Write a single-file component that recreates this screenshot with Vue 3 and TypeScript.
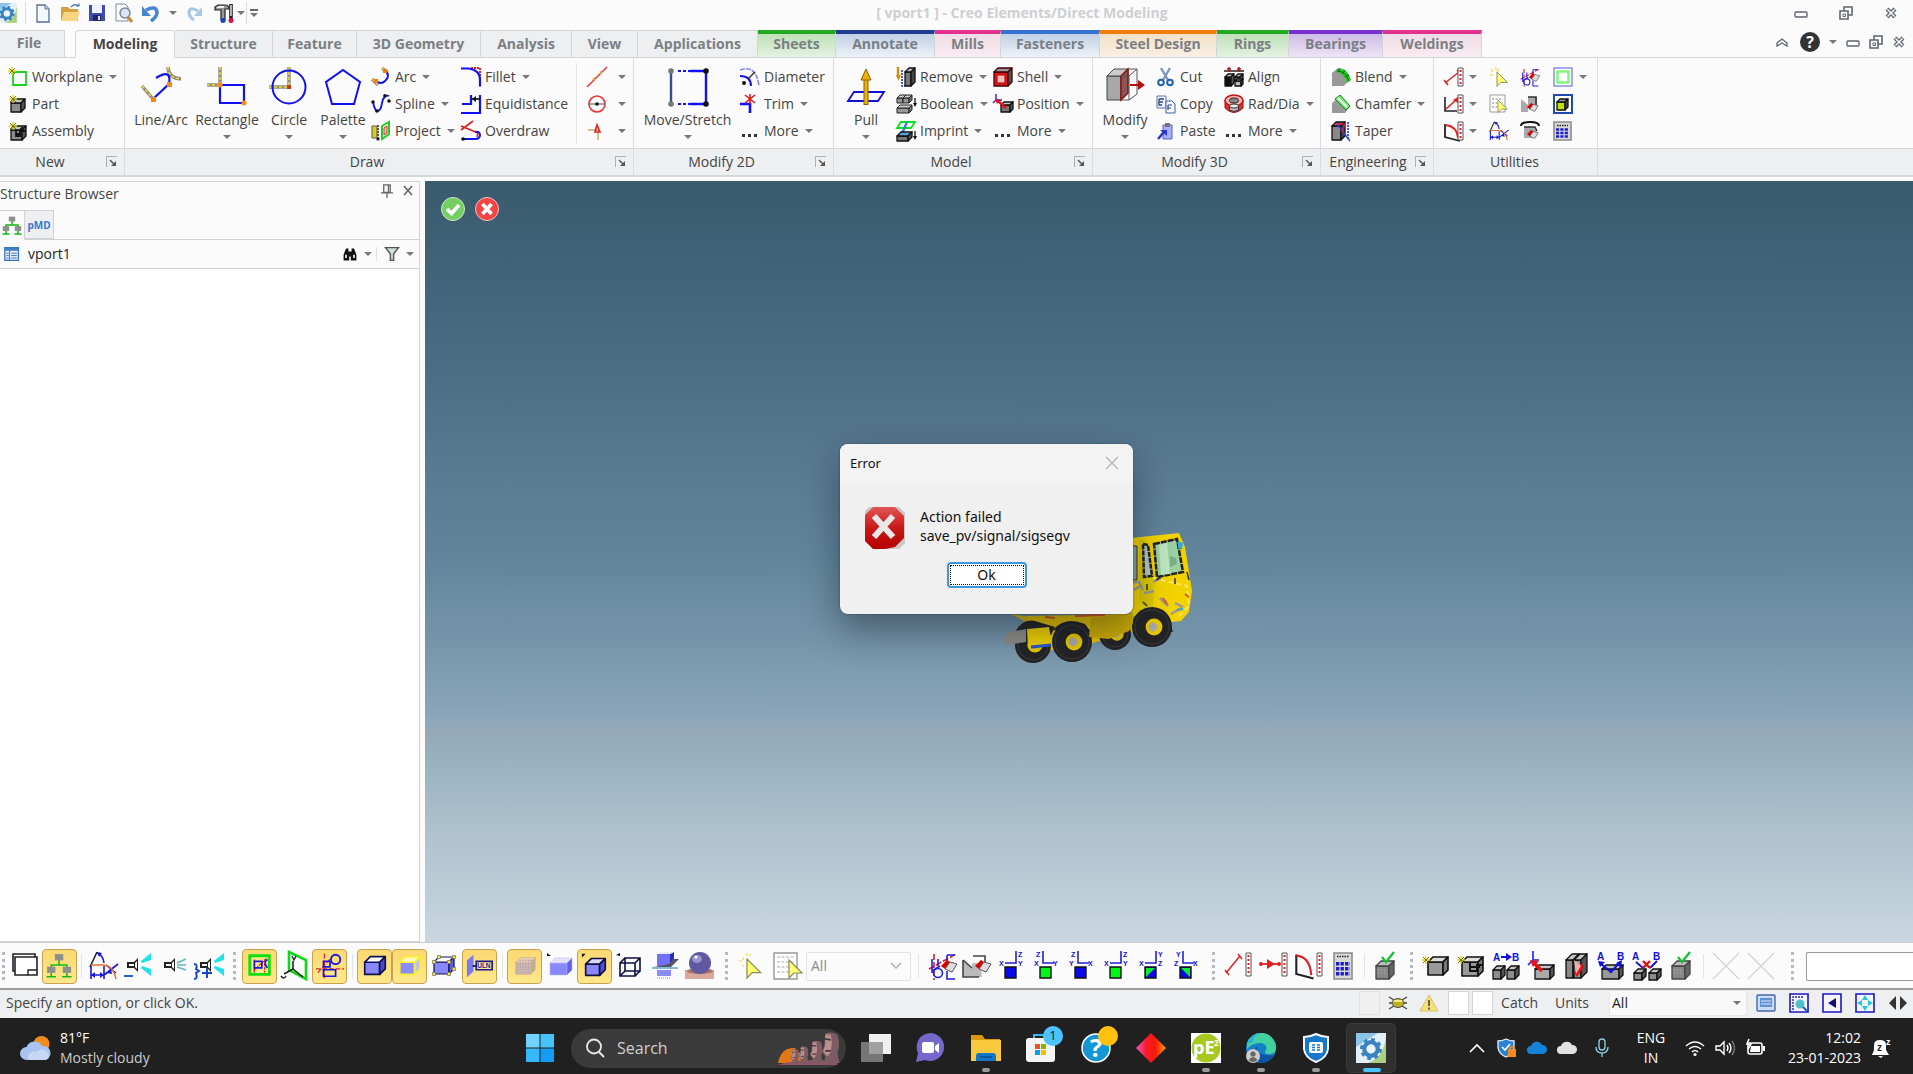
<script setup lang="ts">
interface Tab { label: string; w: number; tint?: string }
interface Item { icon: string; label?: string; name?: string; caret?: boolean }
interface Col { w: number; big?: Item; items?: Item[]; sep?: boolean }
interface Group { title: string; w: number; pad: number; launcher?: boolean; cols: Col[] }
interface Tool { kind?: 'sep' | 'grip' | 'select'; w?: number; icon?: string; name?: string; on?: boolean }

const box = (x: number, y: number, w: number, h: number, d: number, f = '#8c8c8c', t = '#c4c4c4', s = '#555', k = '#111', sw = 1.3) =>
  `<g stroke="${k}" stroke-width="${sw}" stroke-linejoin="round"><path d="M${x} ${y + d}h${w}v${h}h${-w}z" fill="${f}"/><path d="M${x} ${y + d}l${d} ${-d}h${w}l${-d} ${d}z" fill="${t}"/><path d="M${x + w} ${y + d}l${d} ${-d}v${h}l${-d} ${d}z" fill="${s}"/></g>`
const ln = (d: string, c: string, w = 1.5, extra = '') => `<path d="${d}" fill="none" stroke="${c}" stroke-width="${w}" ${extra}/>`
const fl = (d: string, c: string) => `<path d="${d}" fill="${c}"/>`
const spark = (x: number, y: number) => `<g transform="translate(${x} ${y})">${ln('M4 0v8M0 4h8', '#e6dc00', 1.4)}${ln('M1 1l6 6M7 1l-6 6', '#6d6a3c', 1)}</g>`
const tan = (d: string) => ln(d, '#908c80', 3.4) + ln(d, '#f0e030', 1.4, 'stroke-dasharray="3 2"')
const dot = (x: number, y: number, r: number, c: string) => `<circle cx="${x}" cy="${y}" r="${r}" fill="${c}"/>`
const ruler = (x: number, y: number, h: number) => `<path d="M${x} ${y}h5v${h}h-5z" fill="#fff" stroke="#555"/>` + ln(`M${x + 2.5} ${y + 2}v${h - 3}`, '#d22', 2, 'stroke-dasharray="2 2"')
const txt = (x: number, y: number, s: string, size: number, c: string) => `<text x="${x}" y="${y}" font-size="${size}" font-weight="700" fill="${c}" font-family="Liberation Sans, sans-serif">${s}</text>`
const cursor = (x: number, y: number, k = 1) => `<path transform="translate(${x} ${y}) scale(${k})" d="M0 0v18l5-5 8 0z" fill="#ffff70" stroke="#8a8a60" stroke-width="1.2"/>`
const eraser = (x: number, y: number) => `<g transform="translate(${x} ${y})"><path d="M0 6l6-6 3 2-5 7z" fill="#d00"/><path d="M4 9l5-7 7 2-5 8z" fill="#ddd" stroke="#555"/></g>`
const calc = (w: number, h: number) => `<path d="M1 1h${w - 2}v${h - 2}H1z" fill="#d8d8d8" stroke="#8c8c8c" stroke-width="1.6"/>` + ln(`M4 4.500h${w - 8}`, '#222', 1.6, 'stroke-dasharray="1.500 1"') + ln(`M3 ${h * 0.42}h${w - 6}M3 ${h * 0.6}h${w - 6}M3 ${h * 0.78}h${w - 6}`, '#1c1cc8', h / 8, `stroke-dasharray="${w / 6} 1.2"`)
const axes = (flip: boolean, a: string, b: string, c: string, f: string, tri = '') =>
  ln(flip ? 'M10 0v12h11' : 'M18 0v12H7', '#2020d8', 1.6) + txt(flip ? 3 : 20, 6, a, 7, '#1010e0') + txt(1, 15, b, 7, '#1010e0') + txt(20, 15, c, 7, '#1010e0') +
  `<path d="M7 16h11v11H7z" fill="${f}" stroke="#111" stroke-width="1.4"/>` + tri
const gear = (s: number) => `<rect width="30" height="30" fill="#e4f0f8"/><path d="M12 30Q28 24 30 4v26z" fill="#a8d080"/><path d="M0 0h22L0 14z" fill="#8cc4ea"/><g transform="translate(15 16) scale(${s})"><circle r="8" fill="none" stroke="#3b82c0" stroke-width="5"/><circle r="11" fill="none" stroke="#3b82c0" stroke-width="4" stroke-dasharray="4.300 4.300"/><circle r="3.500" fill="#eef6fc"/></g>`
const nodes = (g: string, w: number, h: number) =>
  ln(`M${w / 2} ${h * 0.3}v${h * 0.2}M${w * 0.2} ${h * 0.66}v${-h * 0.16}h${w * 0.6}v${h * 0.16}`, g, 1.6) +
  [[0.5, 0.08], [0.2, 0.56], [0.8, 0.56]].map(([x, y]) => `<rect x="${w * x - w * 0.16}" y="${h * y}" width="${w * 0.32}" height="${h * 0.24}" fill="#8f8f8f"/>`).join('') +
  ln(`M${w * 0.02} ${h * 0.95}h${w * 0.36}M${w * 0.62} ${h * 0.95}h${w * 0.36}M${w * 0.2} ${h * 0.8}v${h * 0.15}M${w * 0.8} ${h * 0.8}v${h * 0.15}`, g, 1.6)
const check = (x: number, y: number) => ln(`M${x} ${y}l4 5 8-10`, '#10c030', 2.2)
const dimArc = ln('M1 16L8 1', '#222', 1.6) + ln('M8 2q6 2 7 10M2 15v13M15 15v13M2 24h13M15 24L29 13M17 14l10 8', '#1818e0', 1.6) + ln('M2 14h12q10 0 13 14', '#e07030', 1.6) + fl('M8 1l5 1-3 4zM2 24l4-3v6zM15 24l-4-3v6zM18 22l5 1-1-5z', '#1818e0')
const lamp = (beam: number) => fl('M3 11h7l4-4v14l-4-4H3z', '#222') + fl('M5 13h5v2H5zM11 12l2-2v8l-2-2z', '#fff') + (beam === 2 ? fl('M17 10L27 2v7l-9 3zM17 17l10 8v-7l-9-3z', '#20e0e8') : ln('M16 12l9-4M16 14h9M16 16l9 3', '#60b8c0', 1.6))
const sketch = ln('M1 18L28 3M6 3v26', '#e01010', 1.5, 'stroke-dasharray="6 2"') + ln('M4 8v14M10 8v7M4 20l8-5M19 4h8M19 4v8M19 20v8h8', '#2020e0', 1.6) + '<circle cx="10" cy="22" r="4.500" fill="none" stroke="#2020e0" stroke-width="1.600"/>'
const measure = (n: number, h: number) => n === 0 ? ln(`M2 ${h - 4}L16 5M1 ${h - 7}l4 5M14 3l4 5`, '#e02020', 1.5) : n === 1 ? ln(`M2 3v${h - 6}h12`, '#222', 1.6) + ln(`M3 ${h - 5}L14 5`, '#e02020', 1.6) + fl('M15 3v6l-5-3z', '#e02020') : ln(`M2 3v${h - 7}l15 4`, '#222', 1.8) + ln(`M2 4q12 1 13 ${h - 7}`, '#e02020', 1.8)
const winX = ln('M2 2l8 8M10 2l-8 8', '#5f6670', 4) + ln('M2.500 2.500l7 7M9.500 2.500l-7 7', '#fff', 1.5)
const folder = fl('M1 4h7l2 2h8v12H1z', '#d9a13b') + fl('M4 9h16l-3 9H1z', '#f6d583') + ln('M11 4q3-4 7-1', '#557aa8', 1.4) + fl('M16 4l4-1-1-3z', '#557aa8')

const I: Record<string, string> = {
  app: `<g transform="scale(.66)">${gear(0.9)}</g>`,
  doc: '<path d="M4 2h8l4 4v13H4z" fill="#f4f8ff" stroke="#5a6f96" stroke-width="1.300"/><path d="M12 2v4h4" fill="#cbd8ee" stroke="#5a6f96"/>',
  open: folder,
  save: fl('M2 2h16v16H2z', '#3f4bb0') + fl('M5 2h10v8H5z', '#eef2ff') + fl('M6 12h8v6H6z', '#20285e') + fl('M11 13h2v4h-2z', '#dde'),
  preview: '<path d="M2 1h9l3 3v14H2z" fill="#fafcff" stroke="#7d8ba3"/><circle cx="11" cy="10" r="5" fill="#d7e6f2" stroke="#7b8794" stroke-width="1.500"/>' + ln('M14 14l4 5', '#c58a3a', 3),
  undo: ln('M5 7q10-5 11 2 0 5-6 9', '#4a86cf', 3.5) + fl('M1 3v10h9z', '#4a86cf'),
  redo: ln('M14 8Q6 3 5 9q0 5 5 8', '#a9c8e6', 3.2) + fl('M18 4v9h-8z', '#a9c8e6'),
  tools: '<path d="M1 7V4l3-2h7q4 0 4 4h-4v11H7V7H5z" fill="#999" stroke="#222" stroke-width="1.200"/><path d="M2 5l3-2h5v2z" fill="#eee"/>' + ln('M17 1v15', '#222', 3.6) + ln('M17 2v11', '#eee', 1.4) + dot(9, 17.5, 2.5, '#1048c8') + dot(17, 17.5, 2.5, '#e01050'),
  workplane: '<path d="M5 5h13v13H5z" fill="none" stroke="#1fd01f" stroke-width="1.800"/>' + spark(0, 0),
  part: box(3, 5, 10, 9, 4) + spark(1, 1),
  assembly: box(3, 5, 11, 10, 4) + ln('M8 9v6h4v-5h6M12 9l3-3M8 13h5', '#111', 1.8) + spark(1, 1),
  lineArc: tan('M1 20l11 13M27 1q0 11 13 12') + ln('M12 33L28 18Q31 2 15 12', '#1010f0', 2.2) + fl('M10 31h5v5h-5zM26 16h5v5h-5z', '#f08a10'),
  rectangle: tan('M13 1v18M0 19h13') + ln('M13 19h24v18H13z', '#1010f0', 2.2) + dot(13, 19, 2.5, '#ff8c10') + dot(37, 37, 2.5, '#ff8c10'),
  circle: tan('M20 1v20M0 21h20') + '<circle cx="20" cy="21" r="16.500" fill="none" stroke="#1010f0" stroke-width="2"/>' + fl('M18 19h4v4h-4z', '#c04010'),
  palette: ln('M20 4l17 12-6 22H9L3 16z', '#1010f0', 2),
  arc: tan('M11 1l5 4M1 12l6 6') + ln('M14 3q6 6 0 11-4 4-9 0', '#1010f0', 2) + fl('M12 2h4v4h-4zM3 12h4v4H3z', '#f07a10'),
  spline: ln('M2 8q2 10 5 9 3-1 4-8 2-9 7-7', '#1010f0', 1.8) + dot(2, 8, 1.8, '#111') + dot(6, 17, 1.8, '#111') + dot(14, 1.800, 1.8, '#111') + dot(18, 7, 1.8, '#111'),
  project: '<path d="M1 5h5v12H1z" fill="#d8d020" stroke="#555"/>' + ln('M7 4v14', '#555', 2, 'stroke-dasharray="2 1"') + '<path d="M11 5l7-4v12l-7 5z" fill="#fff" stroke="#20d020" stroke-width="2"/><path d="M13 7l3-2v7l-3 2z" fill="#fcc" stroke="#e02020"/>' + dot(7, 18, 1.6, '#111'),
  fillet: ln('M10 1h9v9', '#e02020', 2, 'stroke-dasharray="2 1"') + ln('M0 1.500h8q11 2 11 11v7', '#1010f0', 2.2),
  equi: ln('M1 10h9V1M0 19h19V1', '#1010f0', 2.2) + ln('M11 5h8', '#111', 1.6) + fl('M11 5l4-3v6z', '#111'),
  overdraw: ln('M0 9L12 0M0 5l17 7-1 4', '#e02020', 1.6) + ln('M2 18h12q5 0 5-4t-5-3', '#1010f0', 2) + dot(2, 18, 1.8, '#111'),
  hline: ln('M0 20L20 0', '#f03030', 1.5) + fl('M5 12l3-2v4zM13 4l3 1-3 3z', '#e0a050'),
  hcirc: '<circle cx="10" cy="10" r="8" fill="none" stroke="#f03030" stroke-width="1.600"/>' + ln('M1 10h18', '#777', 1.3) + dot(10, 10, 1.8, '#111'),
  hperp: ln('M1 9h10v10', '#d8bc90', 2) + ln('M10 4l3 7H8z', '#e02020', 1.6),
  move: ln('M3 5v33', '#36508c', 2.4) + ln('M10 5h12M10 38h12', '#1010f0', 2.2, 'stroke-dasharray="3 2"') + ln('M22 5h16v33H22', '#1010f0', 2.4) + dot(3, 5, 2.8, '#777') + dot(3, 38, 2.8, '#777') + dot(38, 5, 2.8, '#111') + dot(38, 38, 2.8, '#111'),
  diameter: ln('M0 3q16-6 19 16', '#8888f8', 1.6, 'stroke-dasharray="5 1"') + ln('M0 9q11 0 11 10', '#1010f0', 2) + dot(4, 16, 2, '#111') + ln('M8 12l7-7', '#333', 1.5),
  trim: ln('M0 10h10v9', '#1010f0', 2.6) + ln('M10 0v10M5 1l10 8M15 1L5 9', '#e01010', 1.5),
  more: fl('M2 13h3v3H2zM8 13h3v3H8zM14 13h3v3h-3z', '#333'),
  pull: ln('M8 26h30l-6 9H2z', '#1010d0', 1.8) + ln('M20 14v25', '#8a6000', 5) + ln('M20 14v24', '#f0b000', 3) + '<path d="M20 3l5 11H15z" fill="#f0b000" stroke="#8a6000"/>',
  remove: ln('M2 0v10', '#d09000', 2.4) + fl('M0 8h5l-2.500 6z', '#d09000') + ln('M6 3v16h3', '#2030e0', 1.6, 'stroke-dasharray="2 1"') + box(9, 1, 6, 14, 4, '#777', '#bbb', '#444'),
  boolean: box(1, 1, 6, 5, 3, '#999', '#ccc', '#777', '#222', 1) + box(7, 1, 6, 5, 3, '#999', '#ccc', '#777', '#222', 1) + box(1, 11, 12, 5, 3, '#999', '#ccc', '#777', '#222', 1) + ln('M19 4v7', '#111', 1.3) + fl('M17 9h4l-2 4z', '#111'),
  imprint: ln('M5 1h14l-4 6H1z', '#10e020', 1.8) + ln('M11 1L5 15', '#3080f0', 2.4) + box(1, 11, 11, 5, 4, '#777', '#60a0e0') + ln('M19 10v7', '#111', 1.3) + fl('M17 15h4l-2 4z', '#111'),
  shell: box(1, 1, 14, 14, 4, '#e01818', '#999', '#555', '#400') + '<path d="M4 8h8v8H4z" fill="#fbb" stroke="#a00"/>',
  position: ln('M3 0v6L0 9M3 6h6', '#2020f0', 1.4) + box(8, 8, 9, 7, 3, '#777') + ln('M5 7l8 7', '#f01010', 2.4) + fl('M2 5l6 1-4 4z', '#f01010'),
  modify: box(2, 3, 14, 24, 7, '#a8a8a8', '#ccc', '#999', '#444', 1) + '<path d="M16 10l7-7v24l-7 7z" fill="#8b5555" stroke="#901010" stroke-width="1.500"/>' + ln('M23 3h9v25l-8 6h-8M32 3l-8 7v24M16 10h8', '#555', 1) + ln('M25 19h9', '#b01010', 2) + fl('M33 14v10l7-5z', '#b01010'),
  cut: ln('M5 1l7 12M14 1L7 13', '#8098b8', 2.4) + '<circle cx="5" cy="15.500" r="2.800" fill="none" stroke="#2060b0" stroke-width="2"/><circle cx="14" cy="15.500" r="2.800" fill="none" stroke="#2060b0" stroke-width="2"/>',
  copy: '<path d="M1 2h9v12H1z" fill="#eef3fb" stroke="#5a78a8"/>' + ln('M3 5h5M3 8h4M3 5v6h3', '#2e4a80', 1.3) + '<path d="M10 7h6l3 3v9h-9z" fill="#f6f9ff" stroke="#3a5ea8"/>' + ln('M12 11h4M12 14h3M12 11v5', '#2e4a80', 1.2),
  paste: '<path d="M7 4h9v14H7z" fill="#a8aef0" stroke="#5860c8"/><path d="M9 2h5v4H9z" fill="#777"/>' + ln('M2 18l6-7', '#2838c8', 2.6) + fl('M4 9h7v6z', '#2838c8'),
  align: ln('M0 4h20', '#222', 1.5) + ln('M5 0v5M15 0v5M3 2h4M13 2h4', '#c01010', 1.5) + box(1, 7, 6, 9, 3, '#111') + box(11, 7, 5, 4, 3) + box(11, 12, 6, 5, 2, '#bbb'),
  raddia: '<path d="M1 6v8q9 9 18 0V6z" fill="#e03030" stroke="#a01010"/><ellipse cx="10" cy="6.500" rx="9" ry="5.500" fill="#f9b0b0" stroke="#c01010" stroke-width="1.400"/><ellipse cx="10" cy="6.500" rx="4.500" ry="2.500" fill="#888" stroke="#222"/><path d="M5.500 12v4q4.500 3 9 0v-4z" fill="#bbb" stroke="#333"/><ellipse cx="10" cy="12" rx="4.500" ry="2" fill="#eee" stroke="#333"/>',
  blend: fl('M1 6l6-5 7 3 5 8-6 7H1z', '#999') + fl('M6 2q10-3 14 11l-4 3Q13 6 5 5z', '#28c828') + ln('M6 4q9 0 12 10M9 1l-2 4M14 3l-3 4M18 8l-4 2', '#087008', 1),
  chamfer: fl('M1 9l7-6 11 9-5 7H1z', '#999') + '<path d="M4 5l5-4 10 11-4 4z" fill="#70e870" stroke="#109010"/>' + ln('M7 4l9 9', '#fff', 2),
  taper: box(1, 1, 9, 14, 4, '#888', '#e05070', '#444') + ln('M17 1v18', '#2020e0', 1.5, 'stroke-dasharray="2 1"') + ln('M6 3l13 17', '#3040f0', 1.5) + ln('M6 3h8l-3 8', '#c02040', 1.5),
  m1: measure(0, 20) + ruler(15, 1, 18), m2: measure(1, 20) + ruler(15, 1, 18), m3: measure(2, 20) + ruler(15, 1, 18),
  pick: ln('M3 2v3M7 0v3M1 8h3M10 2l-2 3', '#f0e060', 1.4) + cursor(8, 5, 0.8),
  pickList: '<path d="M1 1h15v17H1z" fill="#fff" stroke="#999"/>' + ln('M3 5h11M3 9h11M3 13h11', '#777', 1, 'stroke-dasharray="2 1.500"') + cursor(9, 6, 0.7),
  dims: `<g transform="scale(.68)">${dimArc}</g>`,
  er1: `<g transform="scale(.68)">${sketch}${eraser(13, 9)}</g>`,
  er2: fl('M1 5l7 6V3h9v9H8v6H1z', '#aaa') + ln('M8 3h8v8', '#333', 1.6) + '<g transform="translate(7 9) scale(.7)">' + eraser(0, 0) + '</g>',
  er3: ln('M1 5q0-4 9-4t9 4', '#111', 2) + fl('M4 6h11l2 4-4 7H4z', '#aaa') + ln('M4 6h11l2 4', '#333', 1.5) + '<g transform="translate(7 9) scale(.7)">' + eraser(0, 0) + '</g>',
  wp: '<path d="M1 1h18v18H1z" fill="#fff" stroke="#8c90e0" stroke-width="1.500"/><path d="M4.500 4.500h11v11h-11z" fill="#fff" stroke="#7cf87c" stroke-width="2.500"/>',
  ybox: '<path d="M1 1h18v18H1z" fill="#fff" stroke="#2048b0" stroke-width="2"/>' + box(4, 5, 8, 8, 3, '#c8e000', '#999', '#444'),
  calc: calc(19, 20),
  t_win: '<path d="M3 3h22v17H3z" fill="#fff" stroke="#222" stroke-width="1.600"/><path d="M5 6h22v18H5z" fill="#fff" stroke="#222" stroke-width="1.600"/>' + ln('M18 24v-5h9', '#222', 1.4),
  t_tree: nodes('#14b814', 28, 28),
  t_dims: dimArc, t_l1: lamp(2) + ln('M0 25h9', '#2060d0', 2), t_l2: `<g transform="translate(2 0)">${lamp(1)}</g>`, t_l3: `<g transform="translate(3 0)">${lamp(2)}</g>` + ln('M0 13q4 0 2 5l3 2-3 2q2 6-2 6M8 22h10M13 17v10', '#1848d0', 2),
  t_w1: '<path d="M4 4h21v20H4z" fill="#ffe98c" stroke="#10e010" stroke-width="3"/>' + ln('M8 20L22 7M9 8v14M20 8v14', '#e02020', 1.4, 'stroke-dasharray="3 1"') + ln('M9 10h8v7H9zM23 8q-5 3 0 9', '#1818e0', 1.8),
  t_w2: ln('M9 1l17 8v19L9 19z', '#10d818', 2.6) + ln('M13 10v8L4 23M13 18l10 8', '#222', 1.6) + ln('M12 5l2 4 2-4M1 25q3 4 5 0', '#222', 1.4),
  t_w3: ln('M0 18h30M9 2v28M2 22L20 2', '#e02020', 1.3, 'stroke-dasharray="5 2"') + '<circle cx="21" cy="8" r="5" fill="none" stroke="#1818e0" stroke-width="2"/><path d="M8 10h7v6H8zM8 19h13v7H8z" fill="none" stroke="#1818e0" stroke-width="1.800"/>',
  t_b1: box(4, 5, 16, 13, 6, '#8888fa', '#fff', '#4848c8', '#101050', 1.8),
  t_b2: box(4, 5, 16, 13, 6, '#8c8cf8', '#fff8c0', '#c0c0f0', '#f8f030', 1.8),
  t_b3: box(4, 6, 15, 12, 5, '#8888fa', '#fff', '#6060d8', '#101050', 1.2) + [[4, 11], [19, 11], [4, 23], [19, 23], [24, 6], [9, 6], [24, 18]].map(([x, y]) => `<path d="M${x - 1.5} ${y - 1.5}h3v3h-3z" fill="#f4f020" stroke="#777" stroke-width=".8"/>`).join(''),
  t_uln: fl('M1 9l7-6v18l-7 6z', '#7a7af0') + ln('M7 15h4', '#181890', 2) + '<path d="M11 10h17v9H11z" fill="#ffe890" stroke="#181890" stroke-width="1.800"/>' + txt(12, 17, 'ULN', 7, '#181890'),
  t_s1: box(5, 6, 16, 13, 5, '#cdb8b0', '#e8d0b0', '#c0ac9c', '#d4b890', 1) + ln('M6 13h15M6 16h15M6 19h15M6 22h15M9 9h14', '#a79cb4', 1.2, 'stroke-dasharray="1.500 1.500"'),
  t_s2: fl('M2 2l4 3H2z', '#111') + box(5, 7, 17, 12, 5, '#8888fa', '#e4e4ff', '#6060e8', '#b0b0f8', 0.5),
  t_s3: fl('M1 6V2l4 0z', '#111') + box(5, 7, 15, 12, 6, '#8888fa', '#d8d8ff', '#5050d8', '#101040', 1.8),
  t_s4: fl('M1 4l4-2v3z', '#111') + ln('M5 12h15v13H5zM10 7h15v13H10zM5 12l5-5M20 12l5-5M5 25l5-5M20 25l5-5', '#101040', 1.6),
  t_clip: fl('M7 3h13v12H7z', '#7070f8') + fl('M20 3l4-2v11l-4 3z', '#2c2cc0') + fl('M7 3l4-2h13l-4 2z', '#e8e8ff') + fl('M4 16h17l8-8h-6l-4 5z', '#556') + ln('M2 17h26', '#50a0c0', 1.4) + fl('M7 19h14v6H7z', '#8c8cf8') + ln('M7 27h14', '#b0b0f8', 1.5, 'stroke-dasharray="1 1"'),
  t_ball: fl('M0 19h29v9H0z', '#d8a898') + '<ellipse cx="15" cy="20" rx="13" ry="3" fill="#a87060"/><circle cx="15" cy="12" r="11" fill="#6058a0"/><ellipse cx="12" cy="8" rx="5" ry="4" fill="#9a94d0"/>' + dot(11, 6, 1.5, '#fff'),
  t_pick: ln('M5 6v3M9 2v3M1 10h3M11 5l2-2M4 14l2 1', '#f4e870', 1.6) + cursor(9, 8, 1.05),
  t_list: '<path d="M1 2h23v26H1z" fill="#fff" stroke="#999" stroke-width="1.400"/>' + ln('M4 6h18M4 11h18M4 16h18M4 21h18', '#aaa', 1.2, 'stroke-dasharray="3 1.500"') + cursor(16, 9, 1),
  t_er1: sketch + eraser(13, 9),
  t_er2: fl('M0 9l9 8v-5l8 0 2 14H0z', '#bbb') + ln('M0 9l9 8M0 9v17h16M10 5h12v7', '#444', 1.6) + eraser(12, 9),
  t_a1: axes(false, 'Z', 'X', 'Y', '#0808e8'), t_a2: axes(true, 'Z', 'X', 'Y', '#00f818'), t_a3: axes(true, 'Z', 'Y', 'X', '#0808e8'),
  t_a4: axes(false, 'Z', 'X', 'Y', '#00f818'), t_a5: axes(false, 'Y', 'X', 'Z', '#0808e8', fl('M8 17h9L8 26z', '#00f030')), t_a6: axes(true, 'Y', 'Z', 'X', '#0808e8', fl('M8 17h9v9z', '#00f030')),
  t_m1: measure(0, 26) + ruler(22, 2, 23), t_m2: ln('M2 13h17', '#e02020', 1.8) + fl('M8 8v10l8-5z', '#e02020') + dot(2, 13, 2, '#e02020') + dot(20, 13, 2, '#e02020') + ruler(23, 2, 23), t_m3: `<g transform="scale(1.150)">${measure(2, 24)}</g>` + ruler(23, 2, 23),
  t_calc: `<g transform="translate(4 1)">${calc(20, 28)}</g>`,
  t_ok: box(5, 10, 13, 13, 5, '#888', '#bbb', '#666', '#444') + ln('M7 19h9M7 22h9', '#bbb', 1, 'stroke-dasharray="1 2"') + check(11, 6),
  t_p1: box(6, 6, 15, 13, 5, '#999', '#ddd', '#777', '#111', 1.6) + spark(0, 5),
  t_p2: box(5, 6, 16, 14, 5, '#999', '#ddd', '#777', '#111', 1.6) + ln('M13 12v8h7v-6h6M14 16h9', '#111', 2) + spark(0, 5),
  t_p3: txt(1, 10, 'A', 10, '#1010e0') + txt(20, 10, 'B', 10, '#1010e0') + ln('M9 6h8', '#1010e0', 2) + fl('M14 2v8l6-4z', '#1010e0') + box(1, 15, 8, 9, 4) + box(15, 15, 8, 9, 4),
  t_p4: ln('M6 0v9l-5 5M6 9h6', '#2020f0', 1.6) + box(8, 14, 15, 10, 4, '#aaa') + ln('M7 12l8 8', '#f01010', 3.4) + fl('M3 9l9 1-6 6z', '#f01010'),
  t_p5: box(4, 3, 7, 18, 6, '#888') + box(12, 3, 7, 18, 6, '#999') + fl('M12 22l7-10 3 4-7 10z', '#e01010') + fl('M12 9l7 6-5 8z', '#f0b0b0'),
  t_p6: txt(0, 9, 'A', 10, '#1010e0') + txt(20, 9, 'B', 10, '#1010e0') + box(5, 14, 17, 10, 4, '#999') + ln('M3 12l11 9 9-10', '#1010e0', 2) + fl('M1 10l7 1-5 5zM25 9l-1 8-5-5z', '#1010e0'),
  t_p7: txt(0, 9, 'A', 10, '#1010e0') + txt(21, 9, 'B', 10, '#1010e0') + box(2, 18, 8, 7, 4) + box(17, 18, 8, 7, 4) + ln('M4 11l7 6M25 10l-7 7', '#1010e0', 1.8) + ln('M11 10l7 7M18 10l-7 7', '#e01010', 2.4),
  t_x: ln('M2 2l26 26M28 2L2 28', '#d4d4d4', 1.4),
  s_bug: ln('M1 4l5 3M1 10h5M1 16l5-3M19 4l-5 3M19 10h-5M19 16l-5-3', '#444', 1.3) + '<ellipse cx="10" cy="10" rx="6" ry="4.500" fill="#b8b020" stroke="#555"/>' + fl('M6 7h8v2H6z', '#f4f080'),
  s_warn: '<path d="M10 2l9 16H1z" fill="#f6e07a" stroke="#d8c070" stroke-linejoin="round"/>' + ln('M10 7v6M10 14.500v2', '#554', 1.8),
  s_view: '<rect x="1" y="2" width="18" height="16" rx="1" fill="#c8dcf4" stroke="#4868a8" stroke-width="1.400"/><path d="M4 5h12v9H4z" fill="#5f8fd8"/>' + ln('M5 8h10M5 11h10', '#dce8fa', 1),
  s_zoom: '<path d="M1 1h18v18H1z" fill="#f4f4f8" stroke="#1818c0" stroke-width="1.600"/>' + ln('M4 17V4h10', '#2020c0', 1.4, 'stroke-dasharray="2 1"') + dot(11, 11, 4.5, '#50c0c8') + ln('M14 14l4 4', '#2060c0', 2),
  s_back: '<path d="M1 1h18v18H1z" fill="#f4f4f8" stroke="#1818c0" stroke-width="1.600"/>' + fl('M14 5v10l-8-5z', '#101080'),
  s_fit: '<path d="M1 1h18v18H1z" fill="#f4f4f8" stroke="#1818c0" stroke-width="1.600"/>' + fl('M10 2l3 5H7zM10 18l3-5H7zM2 10l5-3v6zM18 10l-5-3v6z', '#20c8d8'),
  s_arrows: fl('M8 3v14l-7-7zM12 3v14l7-7z', '#333'),
  b_tree: nodes('#14b814', 20, 20),
  b_port: '<path d="M1 2h17v16H1z" fill="#e8f2fc" stroke="#3870c0" stroke-width="1.600"/>' + fl('M1 2h17v4H1z', '#3f7fd0') + ln('M7 6v12M9 9h7M9 12h7M9 15h7M3 9h3M3 12h3M3 15h3', '#3870c0', 1.2),
  b_find: fl('M2 18v-7l3-8h3v4h4V3h3l3 8v7h-7v-5H9v5z', '#111') + fl('M4 11h2v4H4zM14 11h2v4h-2z', '#fff'),
  b_filter: '<path d="M2 2h16l-6 8v8H8v-8z" fill="#cfe0d4" stroke="#555" stroke-width="1.800"/>',
  pin: ln('M4 1h7v8H4zM9 1v8M1 9.500h13M7.500 10v5', '#666', 1.4),
  close: ln('M3 2l8 9M11 2l-8 9', '#666', 1.6),
  ok: '<circle cx="12" cy="12" r="11.500" fill="#73cf62" stroke="#cfe6d2"/>' + ln('M6 12l4.500 4.500L18 8', '#fff', 3.6),
  no: '<circle cx="12" cy="12" r="11.500" fill="#f44444" stroke="#e6c6cc"/>' + ln('M7.500 7l9 10M16.500 7l-9 10', '#fff', 3.6),
  w_min: '<rect x="1" y="6" width="12" height="5" rx="1" fill="#fff" stroke="#5f6670" stroke-width="1.400"/>',
  w_res: '<path d="M5 1h8v8H5z" fill="#fff" stroke="#5f6670" stroke-width="1.600"/><path d="M1 5h8v8H1z" fill="#fff" stroke="#5f6670" stroke-width="1.600"/><path d="M4 8h2.500v2.500H4z" fill="#fff" stroke="#5f6670"/>',
  w_close: `<g transform="translate(1 1)">${winX}</g>`,
  w_up: ln('M2 8l5-4 5 4v3L7 8l-5 3z', '#5f6670', 1.3),
  help: '<circle cx="10" cy="10" r="10" fill="#333"/><text x="10" y="16" font-size="16" font-weight="700" fill="#fff" text-anchor="middle" font-family="Open Sans, sans-serif">?</text>',
  weather: dot(21, 9, 8, '#f08c1c') + fl('M6 25a6.500 6.500 0 0 1 0-13 9 9 0 0 1 16-1 7 7 0 0 1 2 14z', '#a9c4f0') + fl('M8 25a6 6 0 0 1 8-8 7 7 0 0 1 12 2q2 6-5 6z', '#c6d8f6'),
  win: fl('M1 1h14v14H1z', '#6fd3fb') + fl('M16 1h14v14H16z', '#44c4fb') + fl('M1 16h14v14H1z', '#35b8fa') + fl('M16 16h14v14H16z', '#149cf6'),
  k_task: '<path d="M9 2h22v20H9z" fill="#f0f0f0"/><path d="M1 10h22v20H1z" fill="#8c8c8c" opacity=".8"/>',
  k_chat: '<path d="M16 1a14 14 0 1 1-6 27l-9 2 2-9A14 14 0 0 1 16 1z" fill="#7468cc"/><rect x="7" y="10" width="12" height="11" rx="2" fill="#fff"/>' + fl('M20 14l4-3v10l-4-3z', '#fff'),
  k_folder: fl('M1 3h11l3 4h15v6H1z', '#d9980f') + fl('M1 8h30v21H1z', '#fbc93d') + '<path d="M6 29v-5q0-3 3-3h14q3 0 3 3v5z" fill="#1475c8"/>' + ln('M10 25h12', '#0c4f90', 1.5),
  k_store: ln('M9 8V3h12v5', '#38b8f4', 2) + '<rect x="1" y="6" width="29" height="24" rx="3" fill="#f5f5f5"/>' + fl('M10 12h5v5h-5z', '#f25022') + fl('M16 12h5v5h-5z', '#7fba00') + fl('M10 18h5v5h-5z', '#00a4ef') + fl('M16 18h5v5h-5z', '#ffb900'),
  k_help: '<circle cx="16" cy="16" r="14" fill="#1296d4" stroke="#fff" stroke-width="1.500"/><text x="16" y="25" font-size="25" font-weight="700" fill="#fff" text-anchor="middle" font-family="Open Sans, sans-serif">?</text>',
  k_dia: '<defs><linearGradient id="dg"><stop offset="0" stop-color="#e858c0"/><stop offset=".35" stop-color="#f81828"/><stop offset=".65" stop-color="#fa1808"/><stop offset="1" stop-color="#f8a018"/></linearGradient></defs><path d="M16 1L1 16l15 15 15-15z" fill="url(#dg)"/>',
  k_pe: fl('M1 1h30v30H1z', '#fff') + dot(16, 16, 14.5, '#a8c820') + '<text x="3" y="22" font-size="18" font-weight="700" fill="#fff" font-family="Open Sans, sans-serif">pE</text><text x="24" y="14" font-size="8" font-weight="700" fill="#fff" font-family="Open Sans, sans-serif">2</text>',
  k_edge: dot(16, 16, 15, '#1380c8') + fl('M2 11A15 15 0 0 1 31 14q1 8-7 8-6 0-3-4 2-6-6-7-8 0-13 6z', '#42d0a0') + fl('M2 12a15 15 0 0 1 14-11q-8 2-8 9z', '#28b0d8') + fl('M12 14q-1 11 17 9-4 8-13 8-9-4-8-11z', '#0c55a4') + dot(8, 24, 7, '#ccc') + dot(8, 22, 2.6, '#666') + fl('M3.500 28q4.500-6 9 0-4.500 4-9 0z', '#666'),
  k_shield: '<path d="M16 2q6 3 12 3v12q-1 9-12 13Q5 26 4 17V5q6 0 12-3z" fill="#1878cc" stroke="#f4f8fc" stroke-width="2"/><rect x="9" y="10" width="14" height="11" rx="2" fill="#fff"/>' + ln('M12 13h3M17 13h3M12 15.500h3M17 15.500h3M12 18h3M17 18h3', '#1878cc', 1.4),
  k_creo: `<g transform="translate(1 1)">${gear(0.85)}</g>`,
  y_up: ln('M3 14l7-7 7 7', '#fff', 1.6),
  y_def: '<path d="M9 1q4 2 8 2v7q-1 6-8 9Q2 16 1 10V3q4 0 8-2z" fill="#2a82d8" stroke="#e8f2fc" stroke-width="1.300"/>' + ln('M5 9l3 3 5-6', '#fff', 1.6) + fl('M11 11h8v8h-8z', '#f58a1f') + ln('M13 11V9h4v2', '#f58a1f', 1.4),
  y_c1: fl('M4 16a4 4 0 0 1 0-8 6 6 0 0 1 11-1 4.500 4.500 0 0 1 1 9z', '#1482d8'), y_c2: fl('M4 16a4 4 0 0 1 0-8 6 6 0 0 1 11-1 4.500 4.500 0 0 1 1 9z', '#e2e2e2'),
  y_mic: '<rect x="7" y="1" width="6" height="11" rx="3" fill="none" stroke="#8ac8dc" stroke-width="1.400"/>' + ln('M4 9q0 6 6 6t6-6M10 15v4', '#8ac8dc', 1.4),
  y_wifi: ln('M1 8q9-8 18 0M4 11q6-5 12 0M7 14q3-3 6 0', '#fff', 1.6) + dot(10, 16.5, 1.6, '#fff'),
  y_vol: ln('M1 8h4l4-4v12l-4-4H1z', '#fff', 1.4) + ln('M12 7q2 3 0 6M14 5q4 5 0 10', '#fff', 1.4) + ln('M17 3q5 7 0 14', '#777', 1.4),
  y_bat: '<rect x="3" y="5" width="14" height="11" rx="2" fill="none" stroke="#fff" stroke-width="1.600"/>' + fl('M6 8h9v6H5zM18 8h2v5h-2z', '#fff') + ln('M4 1L2 6h4l-3 5', '#fff', 1.6),
  y_bell: fl('M3 7q0-5 6-5t6 5v5l3 5H1l2-5zM7 18h5l-2 2z', '#fff') + txt(6, 13, 'z', 10, '#202020') + txt(15, 7, 'z', 9, '#fff'),
  err: '<defs><linearGradient id="er" x1="0" y1="0" x2="0" y2="1"><stop offset="0" stop-color="#e25555"/><stop offset=".5" stop-color="#c81818"/><stop offset="1" stop-color="#b40000"/></linearGradient></defs><path d="M4 0h30l6 6v30l-6 6H8l-8-8V4z" fill="#c8c8c8"/><path d="M8 0h22l9 9v22l-9 9-10 2H8l-8-8V8z" fill="url(#er)"/>' + ln('M9 9l19 21M28 9L9 30', '#e8e8e8', 6),
}

const tabs: Tab[] = [
  { label: 'Structure', w: 98 }, { label: 'Feature', w: 84 }, { label: '3D Geometry', w: 124 }, { label: 'Analysis', w: 91 }, { label: 'View', w: 66 }, { label: 'Applications', w: 120 },
  { label: 'Sheets', w: 78, tint: 'green' }, { label: 'Annotate', w: 99, tint: 'navy' }, { label: 'Mills', w: 66, tint: 'pink' }, { label: 'Fasteners', w: 99, tint: 'blue' },
  { label: 'Steel Design', w: 117, tint: 'orange' }, { label: 'Rings', w: 72, tint: 'green' }, { label: 'Bearings', w: 94, tint: 'purple' }, { label: 'Weldings', w: 99, tint: 'pink' },
]
const it = (icon: string, label = '', caret = false, name = ''): Item => ({ icon, label, caret, name })
const groups: Group[] = [
  { title: 'New', w: 124, pad: 6, launcher: true, cols: [{ w: 112, items: [it('workplane', 'Workplane', true), it('part', 'Part'), it('assembly', 'Assembly')] }] },
  {
    title: 'Draw', w: 509, pad: 4, launcher: true, cols: [
      { w: 64, big: it('lineArc', 'Line/Arc') }, { w: 68, big: it('rectangle', 'Rectangle', true) }, { w: 56, big: it('circle', 'Circle', true) }, { w: 52, big: it('palette', 'Palette', true) },
      { w: 90, items: [it('arc', 'Arc', true), it('spline', 'Spline', true), it('project', 'Project', true)] },
      { w: 117, items: [it('fillet', 'Fillet', true), it('equi', 'Equidistance'), it('overdraw', 'Overdraw')] },
      { w: 52, sep: true, items: [it('hline', '', true, 'Construction line'), it('hcirc', '', true, 'Construction circle'), it('hperp', '', true, 'Perpendicular')] }],
  },
  { title: 'Modify 2D', w: 200, pad: 3, launcher: true, cols: [{ w: 101, big: it('move', 'Move/Stretch', true) }, { w: 94, items: [it('diameter', 'Diameter'), it('trim', 'Trim', true), it('more', 'More', true)] }] },
  { title: 'Model', w: 259, pad: 4, launcher: true, cols: [{ w: 56, big: it('pull', 'Pull', true) }, { w: 97, items: [it('remove', 'Remove', true), it('boolean', 'Boolean', true), it('imprint', 'Imprint', true)] }, { w: 98, items: [it('shell', 'Shell', true), it('position', 'Position', true), it('more', 'More', true)] }] },
  { title: 'Modify 3D', w: 228, pad: 3, launcher: true, cols: [{ w: 58, big: it('modify', 'Modify', true) }, { w: 68, items: [it('cut', 'Cut'), it('copy', 'Copy'), it('paste', 'Paste')] }, { w: 97, items: [it('align', 'Align'), it('raddia', 'Rad/Dia', true), it('more', 'More', true)] }] },
  { title: 'Engineering', w: 113, pad: 8, launcher: true, cols: [{ w: 104, items: [it('blend', 'Blend', true), it('chamfer', 'Chamfer', true), it('taper', 'Taper')] }] },
  {
    title: 'Utilities', w: 164, pad: 7, cols: [
      { w: 46, items: [it('m1', '', true, 'Measure length'), it('m2', '', true, 'Measure angle'), it('m3', '', true, 'Measure curve')] },
      { w: 31, items: [it('pick', '', false, 'Select'), it('pickList', '', false, 'Select list'), it('dims', '', false, 'Dimension')] },
      { w: 33, items: [it('er1', '', false, 'Delete 2D'), it('er2', '', false, 'Delete 3D'), it('er3', '', false, 'Delete all')] },
      { w: 44, items: [it('wp', '', true, 'Active workplane'), it('ybox', '', false, 'Active part'), it('calc', '', false, 'Calculator')] }],
  },
]
const b = (icon: string, name: string, on = false): Tool => ({ icon, name, on })
const gap = (kind: 'sep' | 'grip', w: number): Tool => ({ kind, w })
const tools: Tool[] = [
  gap('grip', 7), b('t_win', 'Window'), b('t_tree', 'Structure', true), gap('sep', 9), b('t_dims', 'Dimensions'), b('t_l1', 'Light less'), b('t_l2', 'Light'), b('t_l3', 'Light more'),
  gap('grip', 16), b('t_w1', 'Workplane set', true), b('t_w2', 'Workplane axes'), b('t_w3', 'Geometry', true), gap('sep', 10),
  b('t_b1', 'Shaded', true), b('t_b2', 'Highlighted', true), b('t_b3', 'Vertices'), b('t_uln', 'Labels', true), gap('sep', 10),
  b('t_s1', 'Transparent', true), b('t_s2', 'Faces'), b('t_s3', 'Faces and edges', true), b('t_s4', 'Wireframe'), b('t_clip', 'Clip'), b('t_ball', 'Render'),
  gap('grip', 18), b('t_pick', 'Pick'), b('t_list', 'Pick list'), { kind: 'select' }, gap('sep', 14), b('t_er1', 'Erase 2D'), b('t_er2', 'Erase 3D'),
  b('t_a1', 'View 1'), b('t_a2', 'View 2'), b('t_a3', 'View 3'), b('t_a4', 'View 4'), b('t_a5', 'View 5'), b('t_a6', 'View 6'),
  gap('grip', 16), b('t_m1', 'Length'), b('t_m2', 'Distance'), b('t_m3', 'Angle'), b('t_calc', 'Calculate'), gap('sep', 7), b('t_ok', 'Check part'),
  gap('grip', 16), b('t_p1', 'New part'), b('t_p2', 'New assembly'), b('t_p3', 'Copy A to B'), b('t_p4', 'Place'), b('t_p5', 'Mirror'), b('t_p6', 'Mate'), b('t_p7', 'Unmate'), b('t_ok', 'Check assembly'),
  gap('sep', 9), b('t_x', 'Cancel'), b('t_x', 'Clear'), gap('grip', 28),
]
const apps = [
  { icon: 'k_task', name: 'Task view' }, { icon: 'k_chat', name: 'Chat' }, { icon: 'k_folder', name: 'Explorer', run: true }, { icon: 'k_store', name: 'Store', badge: '1' },
  { icon: 'k_help', name: 'Help', badge: ' ' }, { icon: 'k_dia', name: 'Diamond' }, { icon: 'k_pe', name: 'pE', run: true }, { icon: 'k_edge', name: 'Edge', run: true },
  { icon: 'k_shield', name: 'Shield', run: true }, { icon: 'k_creo', name: 'Creo', run: true, active: true },
]
const wheels = [[30, 113, 18], [112, 102, 16], [69, 110, 20], [149, 95, 20]]
const heads = [{ x: 14, s: 0.5 }, { x: 22, s: 0.6 }, { x: 33, s: 0.8 }, { x: 45, s: 1.1 }]
</script>

<template>
  <div class="screen">
    <header class="titlebar">
      <div class="quick">
        <svg class="i20 appicon" viewBox="0 0 20 20" v-html="I.app" />
        <span class="vline" />
        <button v-for="q in ['doc', 'open', 'save', 'preview', 'undo']" :key="q" class="qb" :aria-label="q"><svg class="i20" viewBox="0 0 20 20" v-html="I[q]" /></button>
        <i class="caret" />
        <button class="qb redo" aria-label="redo"><svg class="i20" viewBox="0 0 20 20" v-html="I.redo" /></button>
        <button class="qb" aria-label="tools"><svg class="i20" viewBox="0 0 20 20" v-html="I.tools" /></button>
        <i class="caret tight" />
        <span class="vline near" />
        <span class="overflow"><i class="caret" /></span>
      </div>
      <h1>[ vport1 ] - Creo Elements/Direct Modeling</h1>
      <div class="winctl">
        <button v-for="w in ['w_min', 'w_res', 'w_close']" :key="w" :aria-label="w.slice(2)"><svg class="i14" viewBox="0 0 14 14" v-html="I[w]" /></button>
      </div>
    </header>

    <nav class="tabs">
      <button class="tab file">File</button>
      <span class="tabgap" />
      <button class="tab active">Modeling</button>
      <button v-for="t in tabs" :key="t.label" class="tab" :class="[t.tint, { tinted: t.tint }]" :style="{ width: t.w + 'px' }">{{ t.label }}</button>
      <span class="fill" />
      <div class="docctl">
        <button aria-label="Collapse"><svg class="i14" viewBox="0 0 14 14" v-html="I.w_up" /></button>
        <button aria-label="Help" class="helpb"><svg class="i20" viewBox="0 0 20 20" v-html="I.help" /></button>
        <i class="caret" />
        <button v-for="w in ['w_min', 'w_res', 'w_close']" :key="w" :aria-label="'Document ' + w.slice(2)"><svg class="i14" viewBox="0 0 14 14" v-html="I[w]" /></button>
      </div>
    </nav>

    <section class="ribbon">
      <div v-for="g in groups" :key="g.title" class="group" :style="{ width: g.w + 'px' }">
        <div class="gbody" :style="{ paddingLeft: g.pad + 'px' }">
          <div v-for="(c, ci) in g.cols" :key="ci" class="col" :class="{ ruled: c.sep }" :style="{ width: c.w + 'px' }">
            <button v-if="c.big" class="big">
              <svg viewBox="0 0 40 40" v-html="I[c.big.icon]" />
              <span>{{ c.big.label }}</span>
              <i v-if="c.big.caret" class="caret" />
            </button>
            <button v-for="(m, mi) in c.items" :key="mi" class="row" :aria-label="m.label || m.name">
              <svg class="i20" viewBox="0 0 20 20" v-html="I[m.icon]" />
              <span v-if="m.label">{{ m.label }}</span>
              <i v-if="m.caret" class="caret" />
            </button>
          </div>
        </div>
        <div class="gtitle"><span>{{ g.title }}</span>
          <svg v-if="g.launcher" class="launch" viewBox="0 0 12 12"><path d="M.5 11V.5H11" fill="none" stroke="#aab0b8" /><path d="M4 4l5 5" stroke="#555" stroke-width="1.500" /><path d="M10 5v5H5z" fill="#555" /></svg>
        </div>
      </div>
      <div class="group rest"><div class="gbody" /><div class="gtitle" /></div>
    </section>

    <main class="work">
      <aside class="browser">
        <div class="bhead">
          <span>Structure Browser</span>
          <button aria-label="Pin"><svg class="i14" viewBox="0 0 15 15" v-html="I.pin" /></button>
          <button aria-label="Close"><svg class="i14" viewBox="0 0 14 14" v-html="I.close" /></button>
        </div>
        <div class="btabs">
          <button class="bt on" aria-label="Structure"><svg class="i20" viewBox="0 0 20 20" v-html="I.b_tree" /></button>
          <button class="bt pmd">pMD</button>
        </div>
        <div class="brow">
          <svg class="i16" viewBox="0 0 20 20" v-html="I.b_port" />
          <span>vport1</span>
          <button aria-label="Find"><svg class="i16" viewBox="0 0 20 20" v-html="I.b_find" /></button><i class="caret" />
          <span class="thin" />
          <button aria-label="Filter"><svg class="i16" viewBox="0 0 20 20" v-html="I.b_filter" /></button><i class="caret" />
        </div>
        <div class="blist" />
      </aside>
      <div class="viewport">
        <div class="confirm">
          <button aria-label="Accept"><svg viewBox="0 0 24 24" v-html="I.ok" /></button>
          <button aria-label="Reject"><svg viewBox="0 0 24 24" v-html="I.no" /></button>
        </div>
        <svg class="truck" viewBox="0 0 192 134">
          <path d="M8 82l40 6v6H30z" fill="#d8bc10" />
          <path d="M24 84l106-2v18l-44 12-16 6H24z" fill="#e8c400" />
          <path d="M88 88l42-6v14l-44 10z" fill="#c9a800" />
          <path d="M128 6l48-5 6 14 7 44-3 21-8 9-18 2-12-10-20 4z" fill="#f2d200" />
          <path d="M136 8l6-1 10 40-2 30-6 4-8-14z" fill="#dcc800" />
          <path d="M150 46l34 8 2 20-10 10" fill="none" stroke="#f8e860" stroke-width="2" stroke-dasharray="5 3" />
          <path d="M151 12l23-5 6 33-26 5z" fill="#9cd0a0" stroke="#222" stroke-width="2.500" stroke-dasharray="6 1" />
          <path d="M156 13l8-2 3 31-9 1z" fill="#bce4c0" />
          <path d="M167 24l6 2 1 6-7 3z" fill="#7cae86" />
          <path d="M140 12l5 1 4 31-8 1z" fill="#b4c4c0" stroke="#222" stroke-width="2.500" stroke-dasharray="5 1" />
          <path d="M126 14h8v34h-8z" fill="#88a89c" stroke="#333" />
          <path d="M175 9l5 2-1 7-4-2z" fill="#30a8d8" />
          <path d="M128 50l8 0 4 8M150 50l8-4M172 71l8 4M141 61l10-2M157 66l8 8M168 82l10-6M131 58l6-4" stroke="#999" stroke-width="2.500" fill="none" />
          <path d="M153 48l5-3M144 52l0 6M172 46v6M184 40l2 8M140 70l4 4" stroke="#333" stroke-width="1.500" />
          <path d="M160 66l4 6M182 62l4 3M42 85l10 1M72 84l30-1M106 91l2 1" stroke="#d85820" stroke-width="2" />
          <path d="M174 78l6-1" stroke="#38a8c8" stroke-width="2" />
          <path d="M10 104q8-18 22-15l20 6-4 8z" fill="#242424" />
          <path d="M50 98q12-14 32-6l6 8-20 2z" fill="#242424" />
          <path d="M130 92q14-24 36-4l4 12-30-4z" fill="#242424" />
          <g v-for="(w, i) in wheels" :key="i">
            <circle :cx="w[0]" :cy="w[1]" :r="w[2]" fill="#242426" />
            <circle :cx="w[0]" :cy="w[1]" :r="w[2] - 3" fill="none" stroke="#3c3c40" stroke-width="1" />
            <circle :cx="w[0] + 2" :cy="w[1]" :r="w[2] * 0.42" fill="#e8c800" />
            <circle :cx="w[0] + 1" :cy="w[1]" :r="w[2] * 0.22" fill="#aaa" />
          </g>
          <path d="M88 86l42-5v10l-4 8-20 8-20-2z" fill="#d0ae04" />
          <path d="M24 97l22-2 3 17-24 4z" fill="#f0d000" />
          <path d="M1 107l4-7 18-3v13l-20 3z" fill="#8e8c88" />
          <path d="M28 115l20-2" stroke="#2858c8" stroke-width="3" />
        </svg>
        <div class="dialog" role="dialog" aria-label="Error">
          <div class="dtitle"><span>Error</span><button aria-label="Close"><svg class="i14" viewBox="0 0 14 14"><path d="M1 1l12 12M13 1L1 13" stroke="#b4b4b4" stroke-width="1.300" /></svg></button></div>
          <div class="dbody">
            <svg class="err" viewBox="0 0 40 42" v-html="I.err" />
            <p>Action failed<br>save_pv/signal/sigsegv</p>
          </div>
          <button class="okb">Ok</button>
        </div>
      </div>
    </main>

    <section class="toolbar">
      <template v-for="(t, i) in tools" :key="i">
        <span v-if="t.kind === 'sep' || t.kind === 'grip'" :class="t.kind" :style="{ width: t.w + 'px' }" />
        <div v-else-if="t.kind === 'select'" class="tsel">
          <select aria-label="Filter"><option>All</option></select>
          <svg viewBox="0 0 12 8"><path d="M1 1l5 5 5-5" fill="none" stroke="#b0b0b0" stroke-width="1.500" /></svg>
        </div>
        <button v-else class="tb" :class="{ on: t.on }" :aria-label="t.name"><svg viewBox="0 0 30 30" v-html="I[t.icon!]" /></button>
      </template>
      <input class="cmd" aria-label="Command" type="text">
    </section>

    <footer class="status">
      <span class="msg">Specify an option, or click OK.</span>
      <span class="cell" />
      <svg class="i20 bug" viewBox="0 0 20 20" v-html="I.s_bug" />
      <svg class="i20 warn" viewBox="0 0 20 20" v-html="I.s_warn" />
      <span class="cell white" /><span class="cell white" />
      <button class="catch">Catch</button><button class="units">Units</button>
      <div class="ssel"><select aria-label="Selection"><option>All</option></select><i class="caret" /></div>
      <button v-for="s in ['s_view', 's_zoom', 's_back', 's_fit', 's_arrows']" :key="s" class="sb" :aria-label="s.slice(2)"><svg class="i20" viewBox="0 0 20 20" v-html="I[s]" /></button>
    </footer>

    <footer class="taskbar">
      <div class="weather"><svg viewBox="0 0 30 27" v-html="I.weather" /><p>81°F<br><span>Mostly cloudy</span></p></div>
      <button class="start" aria-label="Start"><svg viewBox="0 0 31 31" v-html="I.win" /></button>
      <label class="search">
        <svg class="glass" viewBox="0 0 20 20"><circle cx="9" cy="8.500" r="7" fill="none" stroke="#e8e8e8" stroke-width="1.800" /><path d="M14 14l5 5" stroke="#e8e8e8" stroke-width="2" /></svg>
        <input type="text" placeholder="Search" aria-label="Search">
        <svg class="moai" viewBox="0 0 64 40">
          <path d="M1 35Q4 19 18 20l14 15z" fill="#e07818" /><path d="M0 37q24-7 60-4v4z" fill="#8c5468" />
          <g v-for="(h, i) in heads" :key="i" :transform="`translate(${h.x} ${35 - 28 * h.s}) scale(${h.s})`">
            <path d="M3 1q6-2 11 1 3 10 0 17l2 9H2l1-6-3-4 2-6z" fill="#7c5c62" /><path d="M3 2l5 0 1 7-1 9-3 4-3-3-1-2 2-5z" fill="#b8908e" /><path d="M2 6l6 1M3 17h5" stroke="#4a3040" stroke-width="1.500" />
          </g>
        </svg>
      </label>
      <div class="apps">
        <button v-for="a in apps" :key="a.name" class="app" :class="{ act: a.active }" :aria-label="a.name">
          <svg viewBox="0 0 32 32" v-html="I[a.icon]" />
          <span v-if="a.badge" class="badge" :class="{ amber: a.badge === ' ' }">{{ a.badge }}</span>
          <i v-if="a.run" class="run" />
        </button>
      </div>
      <div class="tray">
        <button v-for="y in ['y_up', 'y_def', 'y_c1', 'y_c2']" :key="y" class="ty" :aria-label="y.slice(2)"><svg class="i20" viewBox="0 0 20 20" v-html="I[y]" /></button>
        <button class="ty mic" aria-label="Microphone"><svg class="i20" viewBox="0 0 20 20" v-html="I.y_mic" /></button>
        <p class="lang">ENG<br>IN</p>
        <button v-for="y in ['y_wifi', 'y_vol', 'y_bat']" :key="y" class="ty" :aria-label="y.slice(2)"><svg class="i20" viewBox="0 0 20 20" v-html="I[y]" /></button>
        <p class="clock">12:02<br>23-01-2023</p>
        <button class="ty bell" aria-label="Notifications"><svg class="i20" viewBox="0 0 20 20" v-html="I.y_bell" /></button>
      </div>
    </footer>
  </div>
</template>

<style>
body { margin: 0; overflow: hidden; }
</style>

<style scoped>
* { box-sizing: border-box; }
.screen { display: flex; flex-direction: column; height: 100vh; background: #fbfbfb; color: #444; font: 14px/20px "Open Sans", "Noto Sans", sans-serif; white-space: nowrap; }
button { padding: 0; border: 0; background: none; color: inherit; font: inherit; display: flex; align-items: center; flex: none; }
p { margin: 0; }
svg { display: block; flex: none; overflow: visible; }
.i20 { width: 20px; height: 20px; }
.i16 { width: 16px; height: 16px; }
.i14 { width: 14px; height: 14px; }
.caret { flex: none; width: 0; height: 0; border: 4px solid transparent; border-top-color: #777; border-bottom: 0; }
.fill { flex: 1; }

.titlebar { display: flex; align-items: center; height: 30px; padding-bottom: 4px; }
.quick { display: flex; align-items: center; width: 258px; }
.appicon { margin-left: -3px; }
.vline { width: 1px; height: 22px; background: #d8dadc; margin: 0 3px 0 8px; }
.vline.near { margin: 0 0 0 1px; }
.qb { width: 27px; justify-content: center; }
.quick .caret { margin: 0 1px 0 5px; }
.quick .redo { width: 32px; }
.quick .caret.tight { margin: 0; }
.overflow { border-top: 2px solid #666; padding-top: 2px; margin-left: 3px; }
.quick .overflow .caret { display: block; margin: 0; }
h1 { flex: 1; margin: 0; text-align: center; font-size: 14px; line-height: 20px; font-weight: 700; color: #cdcfd2; }
.winctl { display: flex; gap: 31px; width: 127px; padding-left: 8px; }

.tabs { display: flex; height: 28px; flex: none; }
.tabs > * { border-bottom: 1px solid #d0d5d9; }
.tab { justify-content: center; font-weight: 700; color: #7b7f84; background: #edeff1; border-top: 1px solid #d0d5d9; border-right: 1px solid #d0d5d9; }
.file { width: 65px; padding: 0 6px 2px 0; }
.tabgap { width: 10px; }
.tab.active { width: 100px; color: #444; background: #fbfbfb; border-left: 1px solid #d0d5d9; border-bottom-color: #fbfbfb; border-radius: 4px 4px 0 0; }
.tinted { padding-bottom: 3px; }
.green { border-top: 4px solid #22a722; background: linear-gradient(#bfe0b8, #e4f3e0); }
.navy { border-top: 4px solid #203c90; background: linear-gradient(#c0d0e6, #edf2f8); }
.pink { border-top: 4px solid #e2308c; background: linear-gradient(#f0dce6, #f9ecf2); }
.blue { border-top: 4px solid #3474d0; background: linear-gradient(#c0d0e6, #edf2f8); }
.orange { border-top: 4px solid #ef7d0c; background: linear-gradient(#f2e0c8, #faf0e4); }
.purple { border-top: 4px solid #7a30d0; background: linear-gradient(#cdbce6, #eee4f6); }
.docctl { display: flex; align-items: center; padding-right: 7px; gap: 9px; padding-bottom: 4px; }
.docctl .helpb { margin-left: 2px; }

.ribbon { display: flex; height: 119px; border-bottom: 2px solid #d3d8db; flex: none; }
.group { display: flex; flex-direction: column; flex: none; border-left: 1px solid #d9dde0; }
.group:first-child { border-left: 0; }
.group.rest { flex: 1; }
.gbody { display: flex; flex: 1; padding-top: 5px; }
.gtitle { display: flex; align-items: center; height: 27px; padding: 0 6px 0 4px; background: #edeff1; border-top: 1px solid #d3d8db; }
.gtitle span { flex: 1; text-align: center; }
.launch { width: 12px; height: 12px; margin-left: 10px; }
.group:nth-child(6) .launch { margin-left: 4px; }
.col { flex: none; }
.row { height: 27px; padding-left: 2px; gap: 4px; }
.row .caret { margin-left: 2px; }
.col.ruled { border-left: 1px solid #e2e4e6; padding-left: 8px; height: 81px; }
.col.ruled .caret { margin-left: 7px; }
.big { flex-direction: column; width: 100%; }
.big svg { width: 40px; height: 40px; margin-top: 3px; }
.big span { margin: 4px 0 5px; }

.work { display: flex; flex: 1; min-height: 0; gap: 5px; padding-top: 4px; }
.browser { display: flex; flex-direction: column; width: 420px; border: 1px solid #cfd3d6; border-left: 0; }
.bhead { display: flex; height: 28px; gap: 7px; padding: 2px 4px 0 0; align-items: flex-start; }
.bhead span { flex: 1; }
.btabs { display: flex; height: 30px; border-bottom: 1px solid #cfd3d6; }
.bt { width: 25px; height: 30px; justify-content: center; border: 1px solid #cfd3d6; border-left: 0; background: #edeff2; }
.bt.on { background: #fbfbfb; border-bottom-color: #fbfbfb; }
.bt.pmd { width: 29px; height: 29px; font-size: 10px; font-weight: 700; color: #3478d4; }
.brow { display: flex; align-items: center; height: 29px; padding: 0 5px 0 4px; border-bottom: 1px solid #cfd3d6; color: #222; }
.brow span:first-of-type { flex: 1; padding-left: 8px; }
.brow .caret { margin-left: 6px; }
.thin { width: 1px; height: 14px; background: #e0e0e0; margin: 0 7px 0 4px; }
.blist { flex: 1; background: #fff; }
.viewport { position: relative; flex: 1; background: linear-gradient(#3a5a6d, #44647b 14%, #4e6e86 26%, #5a7a92 38%, #62859b 50%, #7694a9 60%, #8aa5b9 70%, #93a9b9 72%, #9fb6c4 79%, #b0c2cf 86%, #c9d7e0); }
.confirm { display: flex; gap: 10px; padding: 16px; }
.confirm svg { width: 24px; height: 24px; }
.truck { position: absolute; left: 578px; top: 351px; width: 192px; height: 134px; }
.dialog { position: absolute; left: 415px; top: 263px; width: 293px; height: 170px; border-radius: 8px; background: #f0f0f0; box-shadow: 0 16px 36px rgba(10, 20, 30, .42), 0 0 2px rgba(0, 0, 0, .4); color: #111; font-family: "Noto Sans", sans-serif; }
.dtitle { display: flex; align-items: center; justify-content: space-between; height: 38px; padding: 0 14px 0 10px; background: #f3f3f3; border-radius: 8px 8px 0 0; font-size: 13px; }
.dbody { display: flex; padding: 25px 0 0 25px; gap: 15px; }
.dbody p { line-height: 19px; }
.err { width: 40px; height: 42px; }
.okb { width: 80px; height: 26px; margin: 13px auto 0; justify-content: center; background: #fff; border: 2px solid #3d97dc; border-radius: 4px; outline: 1px dotted #111; outline-offset: -4px; }

.toolbar { display: flex; align-items: center; height: 48px; flex: none; padding-top: 1px; border-top: 1px solid #ccd0d3; border-bottom: 2px solid #999c9e; }
.tb { width: 35px; height: 35px; justify-content: center; border: 1px solid transparent; border-radius: 4px; }
.tb svg { width: 30px; height: 30px; }
.tb.on { background: linear-gradient(#fbd872, #ffe88a); border: 1px solid #c9a050; }
.tb.on svg { width: 28px; height: 28px; }
.sep, .grip { flex: none; display: flex; justify-content: center; }
.sep::before { content: ""; width: 1px; height: 24px; background: #e2e4e6; }
.grip::before { content: ""; height: 28px; border-left: 3px dotted #b4bac4; }
.tsel { display: flex; align-items: center; width: 105px; height: 29px; margin-left: 1px; padding: 0 8px 0 4px; border: 1px solid #e2e2e2; border-radius: 2px; }
select { appearance: none; flex: 1; padding: 0; border: 0; background: none; font: inherit; color: inherit; }
.tsel select { color: #8a8a8a; }
.tsel svg { width: 12px; height: 8px; }
.cmd { flex: 1; min-width: 0; height: 29px; border: 1px solid #999; border-right: 0; border-radius: 2px 0 0 2px; background: #fff; }

.status { display: flex; align-items: center; height: 28px; flex: none; background: #edeff1; padding: 0 5px 2px 0; }
.msg { flex: 1; padding-left: 6px; }
.cell { width: 21px; height: 24px; border: 1px solid #e0e2e4; background: #f0f0f0; }
.cell.white { background: #fff; margin-right: 3px; border-color: #d4d4d4; }
.bug { margin: 0 11px 0 8px; }
.warn { margin-right: 9px; }
.catch { margin: 0 17px 0 5px; }
.units { margin-right: 20px; }
.ssel { display: flex; align-items: center; width: 138px; height: 26px; padding: 0 5px 0 2px; margin-right: 9px; background: #f9f9f9; color: #222; border: 1px solid #e4e6e8; }
.sb { margin-right: 13px; }
.sb:last-child { margin-right: 0; }

.taskbar { display: flex; align-items: center; height: 56px; flex: none; padding-top: 4px; background: #202020; color: #fff; }
.weather { display: flex; align-items: center; gap: 9px; width: 525px; padding-left: 20px; }
.weather svg { width: 31px; height: 27px; }
.weather span { color: #ccc; }
.start svg { width: 30px; height: 30px; }
.search { display: flex; align-items: center; width: 275px; height: 39px; margin-left: 16px; padding-left: 14px; border-radius: 20px; background: #3a3a3a; overflow: hidden; }
.glass { width: 20px; height: 20px; }
.search input { flex: 1; min-width: 0; margin-left: 12px; padding: 0; border: 0; outline: 0; background: none; color: #ddd; font: 16px/20px "Open Sans", sans-serif; }
.search input::placeholder { color: #d0d0d0; }
.moai { width: 64px; height: 40px; margin-right: 5px; }
.apps { display: flex; gap: 5px; margin-left: 5px; }
.app { position: relative; width: 50px; height: 50px; justify-content: center; border-radius: 5px; }
.app svg { width: 32px; height: 32px; }
.app.act { background: #2f2f2f; border: 1px solid #3a3a3a; }
.badge { position: absolute; left: 27px; top: 3px; width: 20px; height: 20px; border-radius: 50%; background: #4cc2ff; color: #111; font-size: 12px; line-height: 20px; text-align: center; }
.badge.amber { background: #ffc010; }
.run { position: absolute; left: 21px; bottom: 1px; width: 8px; height: 4px; border-radius: 2px; background: #9a9a9a; }
.act .run { left: 16px; bottom: 0; width: 18px; background: #4cc2ff; }
.tray { display: flex; align-items: center; margin-left: auto; padding-right: 17px; }
.ty { width: 30px; justify-content: center; }
.mic { width: 40px; }
.lang { width: 58px; text-align: center; }
.clock { width: 91px; text-align: right; }
.bell { margin-left: 5px; }
</style>
